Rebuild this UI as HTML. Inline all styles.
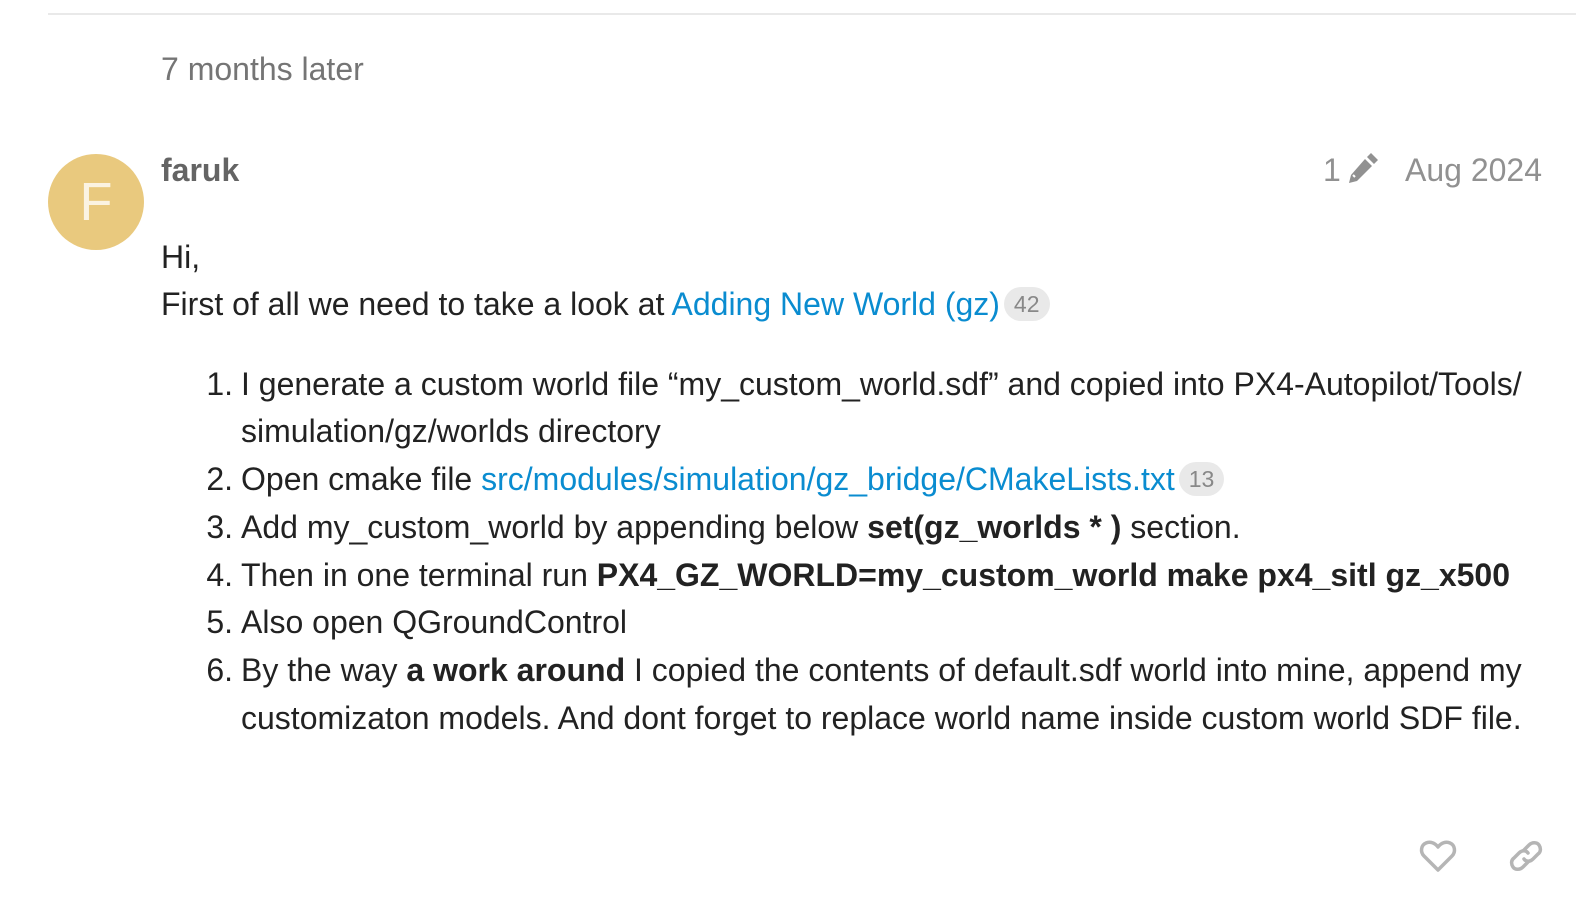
<!DOCTYPE html>
<html><head><meta charset="utf-8"><style>
body{margin:0;width:1576px;height:916px;background:#fff;font-family:"Liberation Sans",Arial,sans-serif;color:#222;position:relative;overflow:hidden}
.a{position:absolute;white-space:nowrap;line-height:48px;font-size:32px}
a{color:#0a8cd0;text-decoration:none}
.b{display:inline-block;background:#e9e9e9;color:#888;font-size:23px;line-height:34px;height:34px;padding:0 10px;border-radius:17px;vertical-align:3px;margin-left:4px}
.n{position:absolute;width:32px;text-align:right;left:201px}
</style></head><body>
<div style="position:absolute;left:48px;top:13px;width:1528px;height:2px;background:#e9e9e9"></div>
<div class="a" style="left:161px;top:45px;color:#757575">7 months later</div>
<div style="position:absolute;left:48px;top:154px;width:96px;height:96px;border-radius:50%;background:#e9c97e;color:#fbf3e2;font-size:54px;line-height:96px;text-align:center">F</div>
<div class="a" style="left:161px;top:146px;font-weight:bold;color:#646464">faruk</div>
<div class="a" style="left:1323px;top:146px;color:#919191">1</div>
<div class="a" style="right:34px;top:146px;color:#919191">Aug 2024</div>
<svg style="position:absolute;left:1346px;top:151px" width="34" height="34" viewBox="0 0 34 34"><path d="M25 2l7 7-4 4-7-7z M19 8l7 7-15 15-8 2 2-8z" fill="#919191"/><path d="M7 24l2 2" stroke="#fff" stroke-width="2"/></svg>
<div class="a" style="left:161px;top:233px">Hi,</div>
<div class="a" style="left:161px;top:280px">First of all we need to take a look at <a>Adding New World (gz)</a><span class="b">42</span></div>
<div class="a n" style="top:360px">1.</div>
<div class="a" style="left:241px;top:360px">I generate a custom world file “my_custom_world.sdf” and copied into PX4-Autopilot/Tools/</div>
<div class="a" style="left:241px;top:407px">simulation/gz/worlds directory</div>
<div class="a n" style="top:455px">2.</div>
<div class="a" style="left:241px;top:455px">Open cmake file <a>src/modules/simulation/gz_bridge/CMakeLists.txt</a><span class="b">13</span></div>
<div class="a n" style="top:503px">3.</div>
<div class="a" style="left:241px;top:503px">Add my_custom_world by appending below <b>set(gz_worlds * )</b> section.</div>
<div class="a n" style="top:551px">4.</div>
<div class="a" style="left:241px;top:551px">Then in one terminal run <b>PX4_GZ_WORLD=my_custom_world make px4_sitl gz_x500</b></div>
<div class="a n" style="top:598px">5.</div>
<div class="a" style="left:241px;top:598px">Also open QGroundControl</div>
<div class="a n" style="top:646px">6.</div>
<div class="a" style="left:241px;top:646px">By the way <b>a work around</b> I copied the contents of default.sdf world into mine, append my</div>
<div class="a" style="left:241px;top:694px">customizaton models. And dont forget to replace world name inside custom world SDF file.</div>
<svg style="position:absolute;left:1419px;top:838px" width="38" height="36" viewBox="0 0 38 36"><path d="M19 32L5 18C1 14 2 7 7 5c4-2 9 0 12 4 3-4 8-6 12-4 5 2 6 9 2 13z" fill="none" stroke="#b5b5b5" stroke-width="3.5" stroke-linejoin="round"/></svg>
<svg style="position:absolute;left:1507px;top:838px" width="38" height="36" viewBox="0 0 38 36"><g fill="none" stroke="#b5b5b5" stroke-width="3.5" stroke-linecap="round"><path d="M17 12l5-5c3-3 8-3 10 0s2 7-1 9l-5 5c-3 3-7 3-9 0"/><path d="M21 24l-5 5c-3 3-8 3-10 0s-2-7 1-9l5-5c3-3 7-3 9 0"/></g></svg>
</body></html>
